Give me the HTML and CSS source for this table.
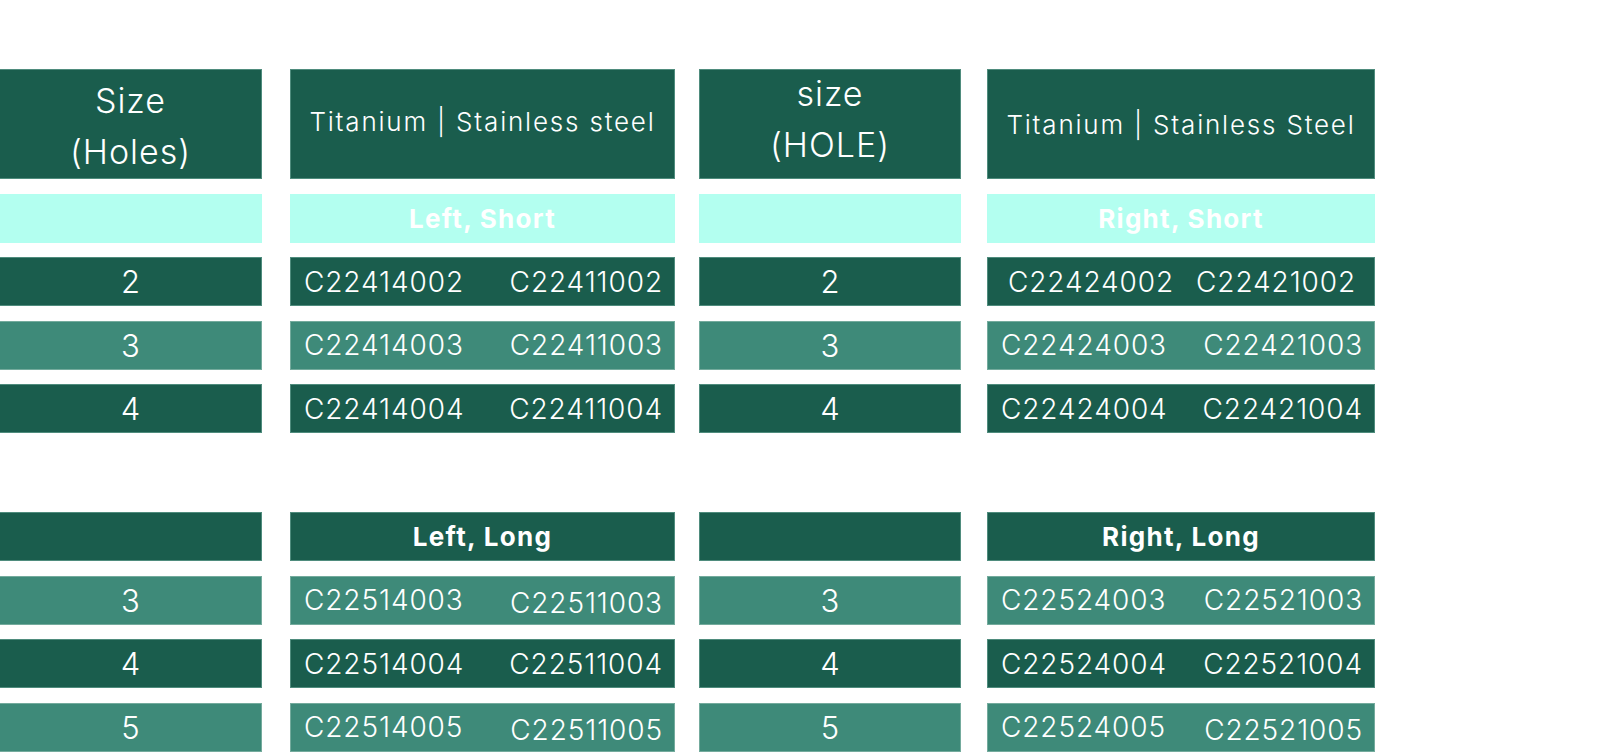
FILE: index.html
```html
<!DOCTYPE html>
<html lang="en">
<head>
<meta charset="utf-8">
<title>Plate codes</title>
<link rel="stylesheet" href="styles.css">
</head>
<body>
<main class="page">
  <section class="block">
    <div class="row head">
      <div class="cell c1 dark hsize"><span>Size</span><span>(Holes)</span></div>
      <div class="cell c2 dark hmat">Titanium | Stainless steel</div>
      <div class="cell c3 dark hsize up"><span>size</span><span>(HOLE)</span></div>
      <div class="cell c4 dark hmat down">Titanium | Stainless Steel</div>
    </div>
    <div class="row">
      <div class="cell c1 light"></div>
      <div class="cell c2 light label">Left, Short</div>
      <div class="cell c3 light"></div>
      <div class="cell c4 light label">Right, Short</div>
    </div>
    <div class="row">
      <div class="cell c1 dark num">2</div>
      <div class="cell c2 dark codes"><span>C22414002</span><span>C22411002</span></div>
      <div class="cell c3 dark num">2</div>
      <div class="cell c4 dark codes tight"><span>C22424002</span><span>C22421002</span></div>
    </div>
    <div class="row">
      <div class="cell c1 mid num">3</div>
      <div class="cell c2 mid codes"><span>C22414003</span><span>C22411003</span></div>
      <div class="cell c3 mid num">3</div>
      <div class="cell c4 mid codes"><span>C22424003</span><span>C22421003</span></div>
    </div>
    <div class="row">
      <div class="cell c1 dark num">4</div>
      <div class="cell c2 dark codes"><span>C22414004</span><span>C22411004</span></div>
      <div class="cell c3 dark num">4</div>
      <div class="cell c4 dark codes"><span>C22424004</span><span>C22421004</span></div>
    </div>
  </section>

  <section class="block second">
    <div class="row">
      <div class="cell c1 dark"></div>
      <div class="cell c2 dark label">Left, Long</div>
      <div class="cell c3 dark"></div>
      <div class="cell c4 dark label">Right, Long</div>
    </div>
    <div class="row">
      <div class="cell c1 mid num">3</div>
      <div class="cell c2 mid codes"><span>C22514003</span><span class="low">C22511003</span></div>
      <div class="cell c3 mid num">3</div>
      <div class="cell c4 mid codes"><span>C22524003</span><span>C22521003</span></div>
    </div>
    <div class="row">
      <div class="cell c1 dark num">4</div>
      <div class="cell c2 dark codes"><span>C22514004</span><span>C22511004</span></div>
      <div class="cell c3 dark num">4</div>
      <div class="cell c4 dark codes"><span>C22524004</span><span>C22521004</span></div>
    </div>
    <div class="row">
      <div class="cell c1 mid num">5</div>
      <div class="cell c2 mid codes"><span>C22514005</span><span class="low">C22511005</span></div>
      <div class="cell c3 mid num">5</div>
      <div class="cell c4 mid codes"><span>C22524005</span><span class="low">C22521005</span></div>
    </div>
  </section>
</main>
</body>
</html>
```

FILE: styles.css
```css
html, body {
  margin: 0;
  padding: 0;
  background: #ffffff;
}

body {
  font-family: Inter, "Open Sans", "Liberation Sans", sans-serif;
  color: #ffffff;
  overflow: hidden;
  height: 752px;
}

.page {
  padding-top: 69px;
}

.block {
  display: flex;
  flex-direction: column;
  gap: 14.5px;
}

.block.second {
  margin-top: 79px;
}

.row {
  display: flex;
  height: 49px;
}

.row.head {
  height: 110px;
}

.cell {
  box-sizing: border-box;
  display: flex;
  align-items: center;
  justify-content: center;
  border: 1px solid transparent;
  white-space: nowrap;
}

.c1 { width: 262px; border-left: none; }
.c2 { width: 385px; margin-left: 28px; }
.c3 { width: 262px; margin-left: 24px; }
.c4 { width: 388px; margin-left: 26px; }

.dark {
  background: #1a5d4d;
  border-color: #4f8c7d;
}

.mid {
  background: #3e8a79;
  border-color: #74ab9d;
}

.light {
  background: #b3fff0;
  border-color: #b3fff0;
}

.hsize {
  flex-direction: column;
  font-size: 34px;
  font-weight: 300;
  line-height: 51px;
  letter-spacing: 1px;
  padding-top: 4px;
}

.hsize.up {
  padding-top: 0;
  padding-bottom: 10px;
}

.hmat {
  font-size: 26px;
  font-weight: 300;
  letter-spacing: 1.8px;
  padding-bottom: 6px;
}

.hmat.down {
  padding-bottom: 0;
}

.label {
  font-size: 26px;
  font-weight: 700;
  letter-spacing: 1.3px;
}

.num {
  font-size: 31px;
  font-weight: 300;
}

.codes {
  justify-content: space-between;
  padding: 0 11px 0 13px;
  font-size: 28px;
  font-weight: 300;
  letter-spacing: 0.9px;
}

.codes.tight {
  justify-content: center;
  gap: 22px;
}

.low {
  padding-top: 6px;
}
```
